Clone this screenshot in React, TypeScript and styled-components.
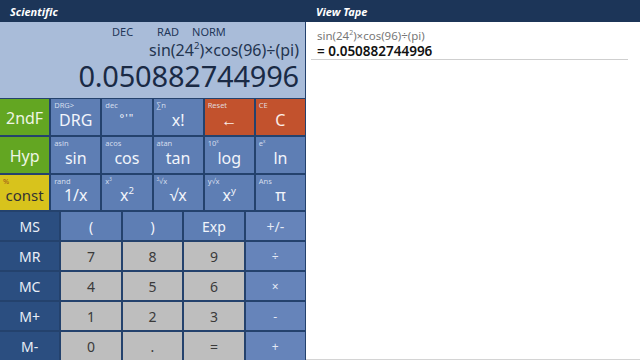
import React, { FC, ReactNode } from 'react';
import styled, { createGlobalStyle } from 'styled-components';

type Tone = 'func' | 'green' | 'red' | 'yellow' | 'mem' | 'num' | 'op';

interface KeyDef {
  main: ReactNode;
  sub?: ReactNode;
  tone?: Tone;
}

const toneBg: Record<Tone, string> = {
  func: '#5e7eb4',
  green: '#63a622',
  red: '#c2522d',
  yellow: '#d8c31c',
  mem: '#2b4e80',
  num: '#bebebe',
  op: '#6684ba',
};

const toneText: Record<Tone, string> = {
  func: '#f2f5fb',
  green: '#eef5e4',
  red: '#fbeee8',
  yellow: '#333333',
  mem: '#e9eef7',
  num: '#3a3a3a',
  op: '#e3e9f5',
};

const GlobalStyle = createGlobalStyle`
  html, body {
    margin: 0;
    padding: 0;
    background: #ffffff;
  }
  body {
    font-family: "Noto Sans", "Open Sans", sans-serif;
  }
`;

const Page = styled.div`
  display: flex;
  width: 640px;
  height: 360px;
  overflow: hidden;
`;

const Calculator = styled.div`
  display: flex;
  flex-direction: column;
  width: 306px;
  background: #24426d;
`;

const TapePanel = styled.div`
  flex: 1;
  display: flex;
  flex-direction: column;
  background: #ffffff;
  border-bottom: 1px solid #d4d4d4;
`;

const TitleBar = styled.div`
  height: 22px;
  flex-shrink: 0;
  display: flex;
  align-items: center;
  padding-left: 10px;
  background: #1c3558;
  color: #ffffff;
  font-size: 11px;
  font-weight: 700;
  font-style: italic;
`;

const Display = styled.div`
  height: 76px;
  flex-shrink: 0;
  display: flex;
  flex-direction: column;
  align-items: flex-end;
  padding: 3px 6px 0 0;
  box-sizing: border-box;
  background: #a9bcd9;
  color: #1d2d4a;
  margin-right: 1px;
`;

const Modes = styled.div`
  display: flex;
  align-self: flex-start;
  margin-left: 112px;
  font-size: 11px;
  line-height: 13px;
  color: #233759;
`;

const Mode = styled.span<{ $space: number }>`
  margin-right: ${({ $space }) => $space}px;
`;

const Expression = styled.div`
  font-size: 16px;
  line-height: 18px;
  margin-top: 3px;
  color: #23344f;
`;

const Result = styled.div`
  font-size: 29px;
  line-height: 28px;
  margin-top: 3px;
  letter-spacing: -0.2px;
  color: #1a2a45;
`;

const Sup = styled.sup`
  font-size: 0.6em;
  line-height: 0;
  vertical-align: 0.7em;
`;

const Keypad = styled.div`
  display: flex;
  flex-direction: column;
  gap: 2px;
  padding: 1px 1px 0 0;
  flex: 1;
`;

const FuncGrid = styled.div`
  display: grid;
  grid-template-columns: repeat(6, 1fr);
  grid-template-rows: 36px 36px 35px;
  gap: 2px;
`;

const MainGrid = styled.div`
  display: grid;
  grid-template-columns: repeat(5, 1fr);
  grid-auto-rows: 28px;
  gap: 2px;
`;

const Key = styled.button<{ $tone: Tone; $size: number }>`
  position: relative;
  display: flex;
  align-items: center;
  justify-content: center;
  border: none;
  margin: 0;
  padding: 0;
  background: ${({ $tone }) => toneBg[$tone]};
  color: ${({ $tone }) => toneText[$tone]};
  font-family: inherit;
  font-size: ${({ $size }) => $size}px;
  line-height: 1;
  cursor: pointer;
`;

const MainLabel = styled.span<{ $lift: boolean }>`
  padding-top: ${({ $lift }) => ($lift ? '5px' : '2px')};
`;

const SubLabel = styled.span<{ $tone: Tone }>`
  position: absolute;
  top: 3px;
  left: 3px;
  font-size: 7.5px;
  line-height: 1;
  color: ${({ $tone }) => ($tone === 'yellow' ? '#a0541a' : 'rgba(232, 238, 250, 0.85)')};
`;

const Dms = styled.span`
  font-size: 11px;
  position: relative;
  top: -4px;
  letter-spacing: 1px;
`;

const TapeList = styled.div`
  padding: 0 12px 0 5px;
`;

const TapeEntry = styled.div`
  padding: 7px 0 0 6px;
  border-bottom: 1px solid #cfcfcf;
`;

const TapeExpr = styled.div`
  font-size: 11.5px;
  line-height: 14px;
  color: #777777;
`;

const TapeResult = styled.div`
  font-size: 13.5px;
  line-height: 16px;
  font-weight: 600;
  color: #111111;
`;

const funcKeys: KeyDef[] = [
  { main: '2ndF', tone: 'green' },
  { sub: 'DRG>', main: 'DRG' },
  { sub: 'dec', main: <Dms>°'"</Dms> },
  { sub: '∑n', main: 'x!' },
  { sub: 'Reset', main: '←', tone: 'red' },
  { sub: 'CE', main: 'C', tone: 'red' },
  { main: 'Hyp', tone: 'green' },
  { sub: 'asin', main: 'sin' },
  { sub: 'acos', main: 'cos' },
  { sub: 'atan', main: 'tan' },
  { sub: <>10<Sup>x</Sup></>, main: 'log' },
  { sub: <>e<Sup>x</Sup></>, main: 'ln' },
  { sub: '%', main: 'const', tone: 'yellow' },
  { sub: 'rand', main: '1/x' },
  { sub: <>x<Sup>3</Sup></>, main: <>x<Sup>2</Sup></> },
  { sub: <><Sup>3</Sup>√x</>, main: '√x' },
  { sub: 'y√x', main: <>x<Sup>y</Sup></> },
  { sub: 'Ans', main: 'π' },
];

const mainKeys: KeyDef[] = [
  { main: 'MS', tone: 'mem' },
  { main: '(', tone: 'func' },
  { main: ')', tone: 'func' },
  { main: 'Exp', tone: 'func' },
  { main: '+/-', tone: 'op' },
  { main: 'MR', tone: 'mem' },
  { main: '7', tone: 'num' },
  { main: '8', tone: 'num' },
  { main: '9', tone: 'num' },
  { main: '÷', tone: 'op' },
  { main: 'MC', tone: 'mem' },
  { main: '4', tone: 'num' },
  { main: '5', tone: 'num' },
  { main: '6', tone: 'num' },
  { main: '×', tone: 'op' },
  { main: 'M+', tone: 'mem' },
  { main: '1', tone: 'num' },
  { main: '2', tone: 'num' },
  { main: '3', tone: 'num' },
  { main: '-', tone: 'op' },
  { main: 'M-', tone: 'mem' },
  { main: '0', tone: 'num' },
  { main: '.', tone: 'num' },
  { main: '=', tone: 'num' },
  { main: '+', tone: 'op' },
];

const expression = (
  <>
    sin(24<Sup>2</Sup>)×cos(96)÷(pi)
  </>
);

const App: FC = () => (
  <>
    <GlobalStyle />
    <Page>
      <Calculator>
        <TitleBar>Scientific</TitleBar>
        <Display>
          <Modes>
            <Mode $space={24}>DEC</Mode>
            <Mode $space={13}>RAD</Mode>
            <Mode $space={0}>NORM</Mode>
          </Modes>
          <Expression>{expression}</Expression>
          <Result>0.050882744996</Result>
        </Display>
        <Keypad>
          <FuncGrid>
            {funcKeys.map((k, i) => {
              const tone = k.tone ?? 'func';
              return (
                <Key key={i} $tone={tone} $size={k.main === 'const' ? 15 : 16}>
                  {k.sub && <SubLabel $tone={tone}>{k.sub}</SubLabel>}
                  <MainLabel $lift={!!k.sub}>{k.main}</MainLabel>
                </Key>
              );
            })}
          </FuncGrid>
          <MainGrid>
            {mainKeys.map((k, i) => {
              const tone = k.tone ?? 'func';
              const small = tone === 'op' && k.main !== '+/-';
              return (
                <Key key={i} $tone={tone} $size={small ? 12 : 14}>
                  <MainLabel $lift={false}>{k.main}</MainLabel>
                </Key>
              );
            })}
          </MainGrid>
        </Keypad>
      </Calculator>
      <TapePanel>
        <TitleBar>View Tape</TitleBar>
        <TapeList>
          <TapeEntry>
            <TapeExpr>{expression}</TapeExpr>
            <TapeResult>= 0.050882744996</TapeResult>
          </TapeEntry>
        </TapeList>
      </TapePanel>
    </Page>
  </>
);

export default App;
